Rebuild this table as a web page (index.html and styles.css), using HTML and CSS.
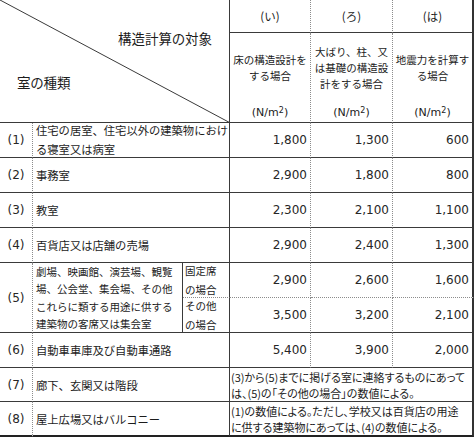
FILE: index.html
```html
<!DOCTYPE html>
<html lang="ja">
<head>
<meta charset="utf-8">
<title>積載荷重</title>
<link rel="stylesheet" href="styles.css">
</head>
<body>
<div class="sheet">
  <div class="cell diag">
    <svg class="diag-line" width="230" height="123" viewBox="0 0 230 123"><line x1="0" y1="0" x2="229.5" y2="122.5" stroke="#3a3a3a" stroke-width="1"/></svg>
    <div class="diag-top">構造計算の対象</div>
    <div class="diag-bottom">室の種類</div>
  </div>
  <div class="cell colhead dotr">(い)</div>
  <div class="cell colhead dotr">(ろ)</div>
  <div class="cell colhead lastc">(は)</div>

  <div class="cell coldesc dotr"><div class="desc-text">床の構造設計を<br>する場合</div><div class="unit">(N/m<sup>2</sup>)</div></div>
  <div class="cell coldesc dotr"><div class="desc-text">大ばり、柱、又<br>は基礎の構造設<br>計をする場合</div><div class="unit">(N/m<sup>2</sup>)</div></div>
  <div class="cell coldesc lastc"><div class="desc-text">地震力を計算す<br>る場合</div><div class="unit">(N/m<sup>2</sup>)</div></div>

  <div class="cell num">(1)</div>
  <div class="cell room wide lines2">住宅の居室、住宅以外の建築物におけ<br>る寝室又は病室</div>
  <div class="cell val dotr">1,800</div>
  <div class="cell val dotr">1,300</div>
  <div class="cell val lastc">600</div>

  <div class="cell num">(2)</div>
  <div class="cell room wide">事務室</div>
  <div class="cell val dotr">2,900</div>
  <div class="cell val dotr">1,800</div>
  <div class="cell val lastc">800</div>

  <div class="cell num">(3)</div>
  <div class="cell room wide">教室</div>
  <div class="cell val dotr">2,300</div>
  <div class="cell val dotr">2,100</div>
  <div class="cell val lastc">1,100</div>

  <div class="cell num">(4)</div>
  <div class="cell room wide">百貨店又は店舗の売場</div>
  <div class="cell val dotr">2,900</div>
  <div class="cell val dotr">2,400</div>
  <div class="cell val lastc">1,300</div>

  <div class="cell num tall">(5)</div>
  <div class="cell room tall lines4">劇場、映画館、演芸場、観覧<br>場、公会堂、集会場、その他<br>これらに類する用途に供する<br>建築物の客席又は集会室</div>
  <div class="cell sub dotb">固定席<br>の場合</div>
  <div class="cell val dotr dotb">2,900</div>
  <div class="cell val dotr dotb">2,600</div>
  <div class="cell val lastc dotb">1,600</div>
  <div class="cell sub">その他<br>の場合</div>
  <div class="cell val dotr">3,500</div>
  <div class="cell val dotr">3,200</div>
  <div class="cell val lastc">2,100</div>

  <div class="cell num">(6)</div>
  <div class="cell room wide">自動車車庫及び自動車通路</div>
  <div class="cell val dotr">5,400</div>
  <div class="cell val dotr">3,900</div>
  <div class="cell val lastc">2,000</div>

  <div class="cell num">(7)</div>
  <div class="cell room wide">廊下、玄関又は階段</div>
  <div class="cell note lastc">(3)から(5)までに掲げる室に連絡するものにあって<br>は、(5)の「その他の場合」の数値による。</div>

  <div class="cell num endrow">(8)</div>
  <div class="cell room wide endrow">屋上広場又はバルコニー</div>
  <div class="cell note lastc endrow">(1)の数値による。ただし、学校又は百貨店の用途<br>に供する建築物にあっては、(4)の数値による。</div>
</div>
</body>
</html>
```

FILE: styles.css
```css
html, body {
  margin: 0;
  padding: 0;
  background: #ffffff;
}

body {
  color: #1c1c1c;
  font-family: "Noto Sans CJK JP", "Noto Sans", sans-serif;
}

.sheet {
  display: grid;
  grid-template-columns: 33px 150px 47px 81px 82px 81px;
  grid-template-rows: 33px 90px 35px 35px 35px 35px 35px 35px 35px 34px 35px;
  width: 474px;
}

.cell {
  box-sizing: border-box;
  border-right: 1px solid #3a3a3a;
  border-bottom: 1px solid #3a3a3a;
  overflow: visible;
  white-space: nowrap;
}

.dotr {
  border-right: 1px dotted #8c8c8c;
}

.dotb {
  border-bottom: 1px dotted #8c8c8c;
}

.lastc {
  border-right: 2px solid #333333;
}

.endrow {
  border-bottom: 2px solid #222222;
}

/* diagonal header */
.diag {
  grid-column: 1 / 4;
  grid-row: 1 / 3;
  position: relative;
  font-size: 13.5px;
  line-height: 18px;
  font-feature-settings: "palt";
}

.diag-line {
  position: absolute;
  left: 0;
  top: 0;
  pointer-events: none;
}

.diag-top {
  margin-top: 29px;
  text-align: right;
  padding-right: 17px;
}

.diag-bottom {
  margin-top: 26px;
  padding-left: 17px;
}

.colhead {
  font-size: 11.5px;
  display: flex;
  align-items: center;
  justify-content: center;
}

.coldesc {
  display: flex;
  flex-direction: column;
  font-size: 10.5px;
}

.desc-text {
  flex: 1;
  display: flex;
  align-items: center;
  justify-content: center;
  text-align: center;
  line-height: 16px;
  padding-top: 1px;
}

.unit {
  height: 20px;
  display: flex;
  align-items: center;
  justify-content: center;
  font-family: "DejaVu Sans", sans-serif;
  font-size: 11px;
}

.unit sup {
  font-size: 8px;
  line-height: 0;
  position: relative;
  top: -1px;
  vertical-align: super;
}

.num {
  border-right: 1px dotted #8c8c8c;
  display: flex;
  align-items: center;
  justify-content: center;
  font-family: "DejaVu Sans", sans-serif;
  font-size: 12px;
  color: #262626;
}

.num.tall {
  grid-row: span 2;
}

.room {
  display: flex;
  align-items: center;
  padding-left: 3px;
  font-size: 11.3px;
  line-height: 18px;
}

.room.wide {
  grid-column: span 2;
}

.room.tall {
  grid-row: span 2;
}

.room.lines2 {
  line-height: 19px;
}

.room.lines4 {
  font-size: 10.5px;
  line-height: 17.5px;
}

.sub {
  display: flex;
  align-items: center;
  padding-left: 2px;
  font-size: 10.5px;
  line-height: 19px;
}

.val {
  display: flex;
  align-items: center;
  justify-content: flex-end;
  padding-right: 3px;
  font-family: "DejaVu Sans", sans-serif;
  font-size: 12px;
  color: #262626;
}

.note {
  grid-column: span 3;
  display: flex;
  align-items: center;
  padding-left: 1px;
  font-size: 11px;
  line-height: 16px;
  font-feature-settings: "palt";
}
```
